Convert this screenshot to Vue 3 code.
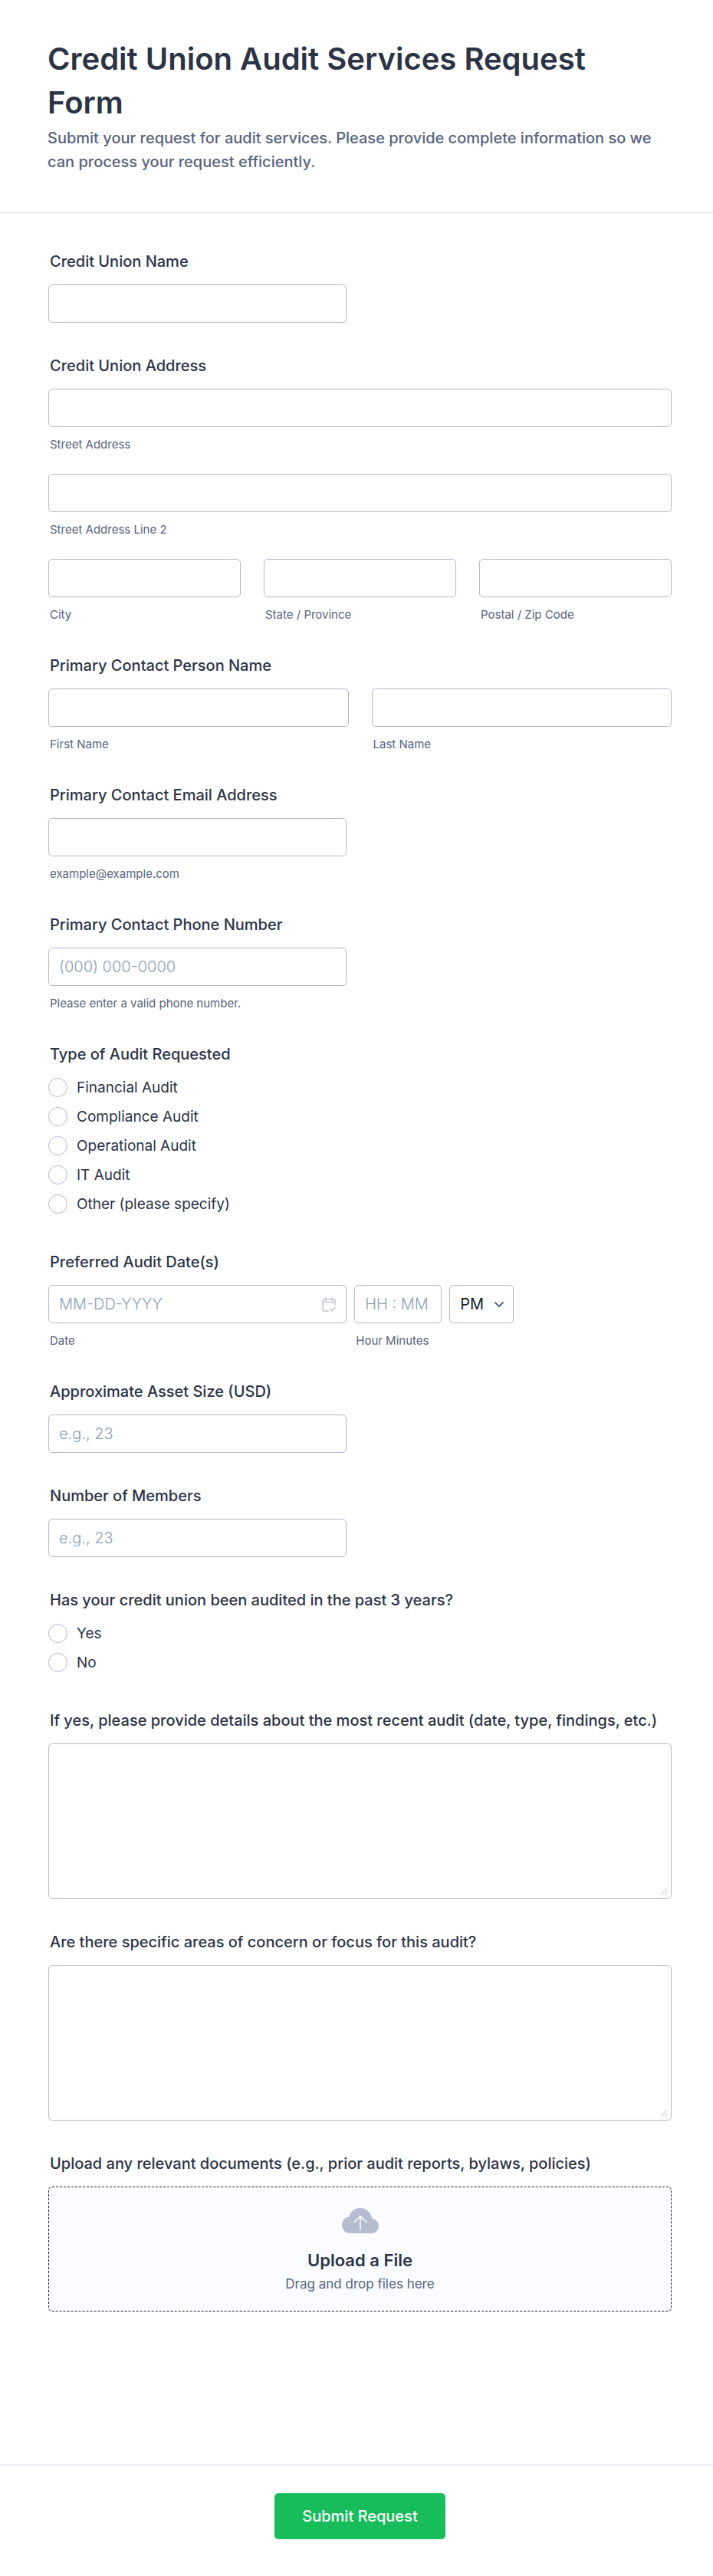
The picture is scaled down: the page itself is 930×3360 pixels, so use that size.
<script setup>
import { ref } from 'vue'

const auditTypes = ['Financial Audit', 'Compliance Audit', 'Operational Audit', 'IT Audit', 'Other (please specify)']
const yesNo = ['Yes', 'No']
const auditType = ref('')
const audited = ref('')
const period = ref('PM')
</script>

<template>
  <form class="form" @submit.prevent>
    <header class="header">
      <h1 class="title">Credit Union Audit Services Request Form</h1>
      <p class="subtitle">Submit your request for audit services. Please provide complete information so we can process your request efficiently.</p>
    </header>

    <main class="fields">
      <div class="field">
        <label class="label" for="cu-name">Credit Union Name</label>
        <input id="cu-name" class="box half" type="text" />
      </div>

      <div class="field" role="group" aria-labelledby="address-label">
        <div id="address-label" class="label">Credit Union Address</div>
        <div class="rows">
          <div>
            <input id="street1" class="box" type="text" />
            <label class="sub" for="street1">Street Address</label>
          </div>
          <div>
            <input id="street2" class="box" type="text" />
            <label class="sub" for="street2">Street Address Line 2</label>
          </div>
          <div class="columns">
            <div>
              <input id="city" class="box" type="text" />
              <label class="sub" for="city">City</label>
            </div>
            <div>
              <input id="state" class="box" type="text" />
              <label class="sub" for="state">State / Province</label>
            </div>
            <div>
              <input id="zip" class="box" type="text" />
              <label class="sub" for="zip">Postal / Zip Code</label>
            </div>
          </div>
        </div>
      </div>

      <div class="field" role="group" aria-labelledby="person-label">
        <div id="person-label" class="label">Primary Contact Person Name</div>
        <div class="columns">
          <div>
            <input id="first" class="box" type="text" />
            <label class="sub" for="first">First Name</label>
          </div>
          <div>
            <input id="last" class="box" type="text" />
            <label class="sub" for="last">Last Name</label>
          </div>
        </div>
      </div>

      <div class="field">
        <label class="label" for="email">Primary Contact Email Address</label>
        <input id="email" class="box half" type="email" />
        <label class="sub" for="email">example@example.com</label>
      </div>

      <div class="field">
        <label class="label" for="phone">Primary Contact Phone Number</label>
        <input id="phone" class="box half" type="tel" placeholder="(000) 000-0000" />
        <label class="sub" for="phone">Please enter a valid phone number.</label>
      </div>

      <div class="field" role="radiogroup" aria-labelledby="type-label">
        <div id="type-label" class="label">Type of Audit Requested</div>
        <div class="options">
          <label v-for="name in auditTypes" :key="name" class="option">
            <input v-model="auditType" class="radio" type="radio" name="audit-type" :value="name" />
            <span>{{ name }}</span>
          </label>
        </div>
      </div>

      <div class="field" role="group" aria-labelledby="date-label">
        <div id="date-label" class="label">Preferred Audit Date(s)</div>
        <div class="datetime">
          <div class="date half">
            <input id="date" class="box" type="text" placeholder="MM-DD-YYYY" />
            <svg class="calendar" viewBox="0 0 18 19" aria-hidden="true">
              <path d="M1 6.5h16M5 .8v4M13 .8v4M17 9.500V4.500a2 2 0 0 0-2-2H3a2 2 0 0 0-2 2V16a2 2 0 0 0 2 2h5.500M11 15.500l2.300 2.200L17 13.500" />
            </svg>
            <label class="sub" for="date">Date</label>
          </div>
          <div class="time">
            <input id="time" class="box" type="text" placeholder="HH : MM" />
            <label class="sub" for="time">Hour Minutes</label>
          </div>
          <div class="period">
            <select v-model="period" class="box" aria-label="AM or PM">
              <option>AM</option>
              <option>PM</option>
            </select>
            <svg class="chevron" viewBox="0 0 14 9" aria-hidden="true">
              <path d="M2 2l5 5 5-5" />
            </svg>
          </div>
        </div>
      </div>

      <div class="field">
        <label class="label" for="assets">Approximate Asset Size (USD)</label>
        <input id="assets" class="box half" type="text" placeholder="e.g., 23" />
      </div>

      <div class="field">
        <label class="label" for="members">Number of Members</label>
        <input id="members" class="box half" type="text" placeholder="e.g., 23" />
      </div>

      <div class="field" role="radiogroup" aria-labelledby="audited-label">
        <div id="audited-label" class="label">Has your credit union been audited in the past 3 years?</div>
        <div class="options">
          <label v-for="name in yesNo" :key="name" class="option">
            <input v-model="audited" class="radio" type="radio" name="audited" :value="name" />
            <span>{{ name }}</span>
          </label>
        </div>
      </div>

      <div class="field">
        <label class="label" for="details">If yes, please provide details about the most recent audit (date, type, findings, etc.)</label>
        <div class="area">
          <textarea id="details" class="box tall"></textarea>
          <svg class="grip" viewBox="0 0 10 10" aria-hidden="true"><path d="M1 9l8-8M6 9l3-3" /></svg>
        </div>
      </div>

      <div class="field">
        <label class="label" for="concerns">Are there specific areas of concern or focus for this audit?</label>
        <div class="area">
          <textarea id="concerns" class="box tall"></textarea>
          <svg class="grip" viewBox="0 0 10 10" aria-hidden="true"><path d="M1 9l8-8M6 9l3-3" /></svg>
        </div>
      </div>

      <div class="field">
        <div id="upload-label" class="label">Upload any relevant documents (e.g., prior audit reports, bylaws, policies)</div>
        <button class="upload" type="button" aria-describedby="upload-label">
          <svg class="cloud" viewBox="0 0 48 33" aria-hidden="true">
            <path class="cloud-body" d="M9.500 11.500C11 4.500 17 0 24 0s13.500 5.500 15.500 13.800C44.500 15 48 18.500 48 23.500S44 33 38.500 33H11C4.500 33 0 28.500 0 22.300 0 16.500 4 12 9.500 11.500Z" />
            <path class="cloud-arrow" d="M24 28V11M16 18.500l8-8 8 8" />
          </svg>
          <span class="upload-title">Upload a File</span>
          <span class="upload-hint">Drag and drop files here</span>
        </button>
      </div>
    </main>

    <footer class="footer">
      <button class="submit" type="submit">Submit Request</button>
    </footer>
  </form>
</template>

<style>
body {
  background: #fff;
}
</style>

<style scoped>
.form,
.form * {
  box-sizing: border-box;
}
.form {
  font-family: Inter, "Liberation Sans", sans-serif;
  color: #2c3345;
}
.header {
  padding: 48px 62px 50px;
  border-bottom: 1px solid #d7d8e1;
}
.title {
  margin: 0;
  font-size: 40px;
  line-height: 57px;
  font-weight: 600;
}
.subtitle {
  margin: 3px 0 0;
  font-size: 20px;
  line-height: 31px;
  font-weight: 500;
  color: #57647e;
}
.fields {
  display: flex;
  flex-direction: column;
  gap: 44px;
  padding: 51px 54px 199px 63px;
}
.label {
  display: block;
  margin-bottom: 17px;
  padding-left: 2px;
  font-size: 20px;
  line-height: 25px;
  font-weight: 500;
}
.box {
  display: block;
  width: 100%;
  height: 50px;
  margin: 0;
  padding: 0 13px;
  border: 1px solid #b4b9cb;
  border-radius: 5px;
  background: #fff;
  color: #2c3345;
  font-family: inherit;
  font-size: 20px;
}
.box::placeholder {
  color: #8d9fb5;
  font-weight: 300;
  opacity: 1;
}
.half {
  width: calc(48% - 1px);
}
.sub {
  display: block;
  margin-top: 13px;
  padding-left: 2px;
  font-size: 15px;
  line-height: 20px;
  color: #57647e;
}
.rows {
  display: flex;
  flex-direction: column;
  gap: 28px;
}
.columns {
  display: flex;
  gap: 30px;
}
.columns > div {
  flex: 1;
  min-width: 0;
}
.options {
  display: flex;
  flex-direction: column;
  align-items: flex-start;
  gap: 13px;
  padding: 1px 0 7px;
}
.option {
  display: flex;
  align-items: center;
  gap: 12px;
  font-size: 19px;
  line-height: 25px;
}
.radio {
  appearance: none;
  width: 25px;
  height: 25px;
  margin: 0;
  border: 1px solid #b4b9cb;
  border-radius: 50%;
  background: #fff;
}
.radio:checked {
  border: 8px solid #18bd5b;
}
.datetime {
  display: flex;
  align-items: flex-start;
  gap: 10px;
}
.date,
.period,
.area {
  position: relative;
}
.calendar {
  position: absolute;
  top: 16px;
  right: 14px;
  width: 18px;
  height: 19px;
  fill: none;
  stroke: #c3c6d4;
  stroke-width: 1.5;
  stroke-linecap: round;
}
.time {
  width: 114px;
}
.period {
  width: 84px;
}
.period .box {
  appearance: none;
  color: #1a1c2c;
}
.chevron {
  position: absolute;
  top: 21px;
  right: 12px;
  width: 14px;
  height: 9px;
  fill: none;
  stroke: #57647e;
  stroke-width: 2;
  stroke-linecap: round;
  stroke-linejoin: round;
  pointer-events: none;
}
.tall {
  height: 203px;
  padding: 12px 13px;
  resize: none;
}
.grip {
  position: absolute;
  right: 5px;
  bottom: 5px;
  width: 10px;
  height: 10px;
  fill: none;
  stroke: #b4b9cb;
  stroke-width: 1;
}
.upload {
  display: flex;
  flex-direction: column;
  align-items: center;
  width: 100%;
  padding: 27px 16px 22px;
  border: 1px dashed #1f2437;
  border-radius: 5px;
  background: #fbfcff;
  color: #2c3345;
  font-family: inherit;
}
.cloud {
  width: 48px;
  height: 33px;
}
.cloud-body {
  fill: #b4bccf;
}
.cloud-arrow {
  fill: none;
  stroke: #fff;
  stroke-width: 1.5;
  stroke-linecap: round;
  stroke-linejoin: round;
}
.upload-title {
  margin-top: 20px;
  font-size: 22px;
  line-height: 30px;
  font-weight: 600;
}
.upload-hint {
  margin-top: 4px;
  font-size: 17px;
  line-height: 25px;
  color: #57647e;
}
.footer {
  display: flex;
  justify-content: center;
  padding: 36px 54px 48px 63px;
  border-top: 2px solid #eeeff5;
}
.submit {
  min-width: 223px;
  height: 60px;
  padding: 0 36px;
  border: 0;
  border-radius: 5px;
  background: #18bd5b;
  color: #fff;
  font-family: inherit;
  font-size: 20px;
  font-weight: 500;
}
</style>
